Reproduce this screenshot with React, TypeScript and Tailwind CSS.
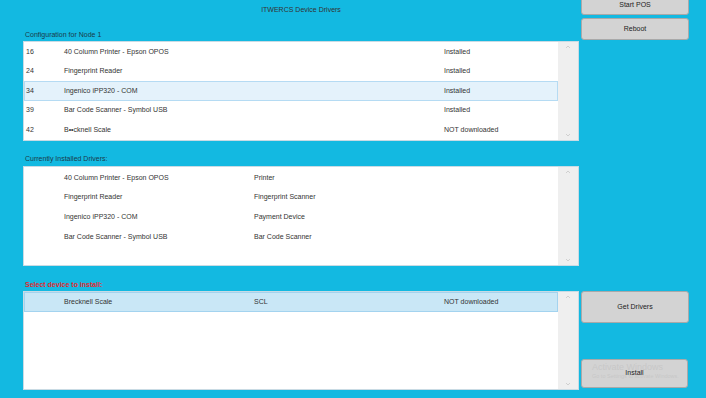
import React from "react";

const font = { fontFamily: '"Liberation Sans", Arial, sans-serif' };

function ScrollBar() {
  return (
    <div className="w-[20px] h-full bg-[#efefef] flex flex-col items-center justify-between shrink-0">
      <svg width="6" height="6" viewBox="0 0 6 6" className="mt-[2px]">
        <path d="M1 4 L3 2 L5 4" fill="none" stroke="#c8c8c8" strokeWidth="0.8" />
      </svg>
      <svg width="6" height="6" viewBox="0 0 6 6" className="mb-[2px]">
        <path d="M1 2 L3 4 L5 2" fill="none" stroke="#c8c8c8" strokeWidth="0.8" />
      </svg>
    </div>
  );
}

type Row = { a?: string; b: string; c?: string; d?: string; hl?: boolean };

function ConfigPanel() {
  const rows: Row[] = [
    { a: "16", b: "40 Column Printer - Epson OPOS", d: "Installed" },
    { a: "24", b: "Fingerprint Reader", d: "Installed" },
    { a: "34", b: "Ingenico iPP320 - COM", d: "Installed", hl: true },
    { a: "39", b: "Bar Code Scanner - Symbol USB", d: "Installed" },
    { a: "42", b: "B\u2022\u2022cknell Scale", d: "NOT downloaded" },
  ];
  return (
    <div className="h-[100px] bg-white border border-[#c9dbe4] flex">
      <div className="flex-1 flex flex-col">
        {rows.map((r, i) => (
          <div
            key={i}
            className={
              "h-[19.6px] flex items-center text-[7px] text-[#333] " +
              (r.hl ? "bg-[#e4f2fb] border border-[#b5dbf3]" : "border border-transparent")
            }
          >
            <span className="w-[39px] pl-[1px] shrink-0">{r.a}</span>
            <span className="w-[380px] shrink-0">{r.b}</span>
            <span>{r.d}</span>
          </div>
        ))}
      </div>
      <ScrollBar />
    </div>
  );
}

function InstalledPanel() {
  const rows: Row[] = [
    { b: "40 Column Printer - Epson OPOS", c: "Printer" },
    { b: "Fingerprint Reader", c: "Fingerprint Scanner" },
    { b: "Ingenico iPP320 - COM", c: "Payment Device" },
    { b: "Bar Code Scanner - Symbol USB", c: "Bar Code Scanner" },
  ];
  return (
    <div className="h-[100px] bg-white border border-[#c9dbe4] flex">
      <div className="flex-1 flex flex-col pt-[1px]">
        {rows.map((r, i) => (
          <div key={i} className="h-[19.8px] flex items-center text-[7px] text-[#333] border border-transparent">
            <span className="w-[39px] shrink-0" />
            <span className="w-[190px] shrink-0">{r.b}</span>
            <span>{r.c}</span>
          </div>
        ))}
      </div>
      <ScrollBar />
    </div>
  );
}

function SelectPanel() {
  return (
    <div className="h-[99px] bg-white border border-[#c9dbe4] flex">
      <div className="flex-1 flex flex-col">
        <div className="h-[20px] flex items-center text-[7px] text-[#333] bg-[#c9e7f6] border border-[#a3d3ef]">
          <span className="w-[39px] shrink-0" />
          <span className="w-[190px] shrink-0">Brecknell Scale</span>
          <span className="w-[190px] shrink-0">SCL</span>
          <span>NOT downloaded</span>
        </div>
      </div>
      <ScrollBar />
    </div>
  );
}

function Btn({ label, className }: { label: string; className: string }) {
  return (
    <div
      className={
        "bg-[#d3d3d3] border border-[#a9a9a9] rounded-[3px] flex items-center justify-center text-[7px] text-[#222] " +
        className
      }
    >
      {label}
    </div>
  );
}

export default function App() {
  return (
    <div className="w-[706px] h-[398px] bg-[#13b9e1] overflow-hidden relative" style={font}>
      <div className="flex pl-[23px]">
        <div className="w-[556px] flex flex-col">
          <div className="h-[20px] leading-[20px] text-center text-[7px] text-[#333]">ITWERCS Device Drivers</div>
          <div className="mt-[10px] h-[10px] leading-[10px] text-[7px] text-[#1a3a4a] pl-[2px]">Configuration for Node 1</div>
          <div className="mt-[1px]">
            <ConfigPanel />
          </div>
          <div className="mt-[13px] h-[10px] leading-[10px] text-[7px] text-[#1a3a4a] pl-[2px]">Currently Installed Drivers:</div>
          <div className="mt-[2px]">
            <InstalledPanel />
          </div>
          <div className="mt-[14px] h-[10px] leading-[10px] text-[7px] font-bold text-[#e0282e] pl-[2px]">Select device to install:</div>
          <div className="mt-[1px]">
            <SelectPanel />
          </div>
        </div>
        <div className="ml-[2px] flex flex-col">
          <Btn label="Start POS" className="mt-[-5px] h-[20px] w-[108px]" />
          <Btn label="Reboot" className="mt-[3px] h-[22px] w-[108px]" />
          <Btn label="Get Drivers" className="mt-[251px] h-[32px] w-[108px]" />
          <Btn label="Install" className="mt-[36px] h-[29px] w-[107px]" />
        </div>
      </div>
      <div className="absolute left-[592px] top-[362px] pointer-events-none">
        <div className="text-[9px] leading-[10px] text-[#c4c4c4]/80">Activate Windows</div>
        <div className="text-[5.5px] leading-[8px] text-[#c4c4c4]/80">Go to Settings to activate Windows.</div>
      </div>
    </div>
  );
}
